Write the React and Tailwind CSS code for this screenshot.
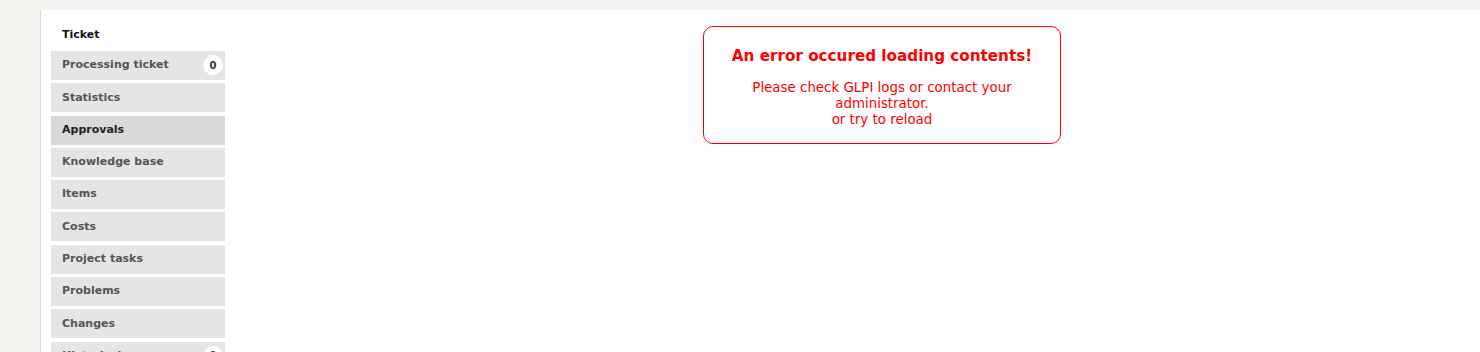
import React from 'react';

const tabs = [
  { label: 'Processing ticket', badge: '0' },
  { label: 'Statistics' },
  { label: 'Approvals', active: true },
  { label: 'Knowledge base' },
  { label: 'Items' },
  { label: 'Costs' },
  { label: 'Project tasks' },
  { label: 'Problems' },
  { label: 'Changes' },
  { label: 'Historical', badge: '0' },
];

const App = () => {
  return (
    <div className="h-[352px] overflow-hidden bg-[#f5f4f0] pt-[10px] pl-[40px] font-['DejaVu_Sans',Verdana,sans-serif]">
      <div className="flex h-full bg-white border-l border-[#dcdcdc]">
        {/* Tabs */}
        <div className="w-[184px] pl-[10px] pt-[16px] shrink-0">
          <div className="h-[25px] pb-[6px] pl-[11px] text-[11px] font-bold text-[#111] flex items-center">
            Ticket
          </div>
          <ul>
            {tabs.map((tab) => (
              <li
                key={tab.label}
                className={`relative h-[29px] mb-[3.3px] flex items-center pl-[11px] text-[11px] font-bold ${
                  tab.active ? 'bg-[#d9d9d9] text-[#222]' : 'bg-[#e5e5e5] text-[#555]'
                }`}
              >
                {tab.label}
                {tab.badge && (
                  <span className="absolute right-[2px] top-[4px] w-[20px] h-[20px] rounded-full bg-white text-[10px] text-[#333] flex items-center justify-center">
                    {tab.badge}
                  </span>
                )}
              </li>
            ))}
          </ul>
        </div>

        {/* Content */}
        <div className="flex-1 pl-[478px] pt-[16px]">
          <div className="w-[358px] h-[118px] border border-[#ff0000] rounded-[10px] text-[#ff0000] text-center pt-[19px]">
            <h3 className="text-[15.2px] font-bold leading-[20px]">An error occured loading contents!</h3>
            <p className="mt-[14px] px-[40px] text-[13.4px] leading-[16px]">
              Please check GLPI logs or contact your administrator.
              <br />
              or try to reload
            </p>
          </div>
        </div>
      </div>
    </div>
  );
};

export default App;
